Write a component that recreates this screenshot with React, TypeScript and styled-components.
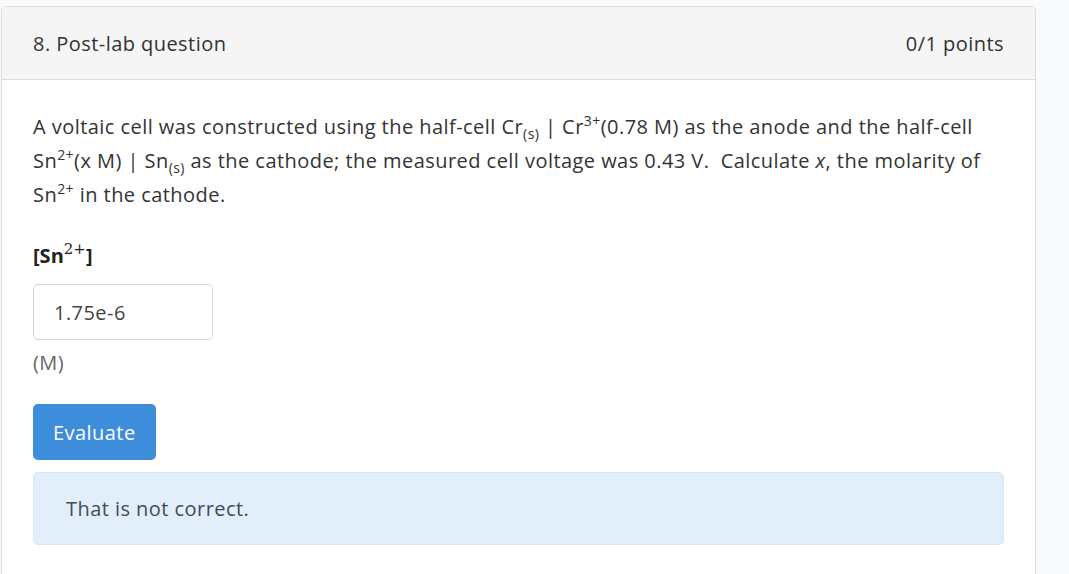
import React from "react";
import styled, { createGlobalStyle } from "styled-components";

const FONT = `"Open Sans", "Noto Sans", sans-serif`;

const GlobalStyle = createGlobalStyle`
  html, body { margin: 0; padding: 0; background: #f9fafb; }
  body { font-family: ${FONT}; color: #333; letter-spacing: 0.45px; }
`;

const Page = styled.div`
  padding: 6px 0 0 1px;
  width: 1035px;
`;

const Card = styled.section`
  background: #fff;
  border: 1px solid #dedede;
  border-radius: 5px;
  overflow: hidden;
`;

const Header = styled.header`
  display: flex;
  justify-content: space-between;
  align-items: center;
  height: 72px;
  padding: 0 31px;
  background: #f5f5f5;
  border-bottom: 1px solid #dcdcdc;
  font-size: 20px;
  color: #333;
`;

const Body = styled.div`
  padding: 30px 31px 40px 31px;
  display: flex;
  flex-direction: column;
`;

const Question = styled.p`
  margin: 0;
  font-size: 20px;
  line-height: 34px;
  color: #333;
`;

const Sub = styled.sub`
  font-size: 14px;
  vertical-align: -5px;
  line-height: 0;
`;

const Sup = styled.sup`
  font-size: 14px;
  vertical-align: 8px;
  line-height: 0;
`;

const Label = styled.div`
  margin-top: 30px;
  font-size: 20px;
  font-weight: 700;
  line-height: 28px;
  letter-spacing: 0;
  color: #222;
`;

const MathSup = styled.sup`
  font-family: "DejaVu Serif", "Liberation Serif", serif;
  font-weight: 400;
  font-size: 15px;
  vertical-align: 9px;
  line-height: 0;
`;

const Input = styled.input`
  margin-top: 14px;
  width: 180px;
  height: 56px;
  box-sizing: border-box;
  border: 1px solid #d4d4d4;
  border-radius: 5px;
  padding: 0 20px;
  font-family: ${FONT};
  font-size: 20px;
  letter-spacing: 0.45px;
  color: #444;
  outline: none;
`;

const Unit = styled.div`
  margin-top: 9px;
  font-size: 20px;
  line-height: 28px;
  color: #666;
`;

const Button = styled.button`
  margin-top: 27px;
  align-self: flex-start;
  height: 56px;
  padding: 0 20px;
  background: #3d8ddb;
  border: none;
  border-radius: 5px;
  color: #fff;
  font-family: ${FONT};
  font-size: 20px;
  letter-spacing: 0.45px;
  cursor: pointer;
`;

const Alert = styled.div`
  margin-top: 12px;
  height: 73px;
  box-sizing: border-box;
  display: flex;
  align-items: center;
  padding: 0 32px;
  background: #e2eef9;
  border: 1px solid #d8e6f3;
  border-radius: 5px;
  font-size: 20px;
  color: #3c4d5e;
`;

export default function App() {
  return (
    <>
      <GlobalStyle />
      <Page>
        <Card>
          <Header>
            <span>8. Post-lab question</span>
            <span>0/1 points</span>
          </Header>
          <Body>
            <Question>
              A voltaic cell was constructed using the half-cell Cr<Sub>(s)</Sub> | Cr<Sup>3+</Sup>(0.78 M) as the
              anode and the half-cell Sn<Sup>2+</Sup>(x M) | Sn<Sub>(s)</Sub> as the cathode; the measured cell
              voltage was 0.43 V.&nbsp; Calculate <i>x</i>, the molarity of Sn<Sup>2+</Sup> in the cathode.
            </Question>
            <Label>
              [Sn<MathSup>2+</MathSup>]
            </Label>
            <Input defaultValue="1.75e-6" />
            <Unit>(M)</Unit>
            <Button>Evaluate</Button>
            <Alert>That is not correct.</Alert>
          </Body>
        </Card>
      </Page>
    </>
  );
}
